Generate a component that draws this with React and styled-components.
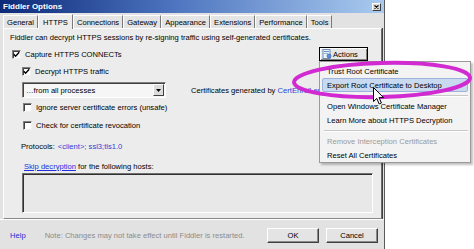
import styled, { createGlobalStyle } from "styled-components";

const GlobalStyle = createGlobalStyle`
  html, body {
    margin: 0;
    background: #ffffff;
  }
  body {
    font-family: "Liberation Sans", Arial, sans-serif;
    font-size: 7.6px;
    color: #000000;
  }
`;

const Page = styled.div`
  position: relative;
  width: 474px;
  height: 249px;
  overflow: hidden;
  display: flex;
`;

const Dialog = styled.div`
  width: 385px;
  height: 249px;
  box-sizing: border-box;
  background: #e2e2e2;
  border-right: 1px solid #5a5a5a;
  display: flex;
  flex-direction: column;
`;

const TitleBar = styled.div`
  height: 13px;
  flex: none;
  display: flex;
  align-items: center;
  justify-content: space-between;
  padding: 0 3px 0 3px;
  background: linear-gradient(to right, #0c2a78, #4d74bf 45%, #a9cbef);
  color: #ffffff;
  font-weight: bold;
  font-size: 8px;
`;

const CloseButton = styled.div`
  width: 9px;
  height: 8px;
  box-sizing: border-box;
  background: #d8d8d8;
  border: 1px solid;
  border-color: #ffffff #404040 #404040 #ffffff;
  display: flex;
  align-items: center;
  justify-content: center;
`;

const Body = styled.div`
  padding: 0 2px 0 3px;
  display: flex;
  flex-direction: column;
`;

const TabRow = styled.div`
  height: 15px;
  display: flex;
  align-items: flex-end;
`;

const Tab = styled.div`
  height: ${(p) => (p.$active ? 15 : 13)}px;
  box-sizing: border-box;
  padding: 0 ${(p) => (p.$active ? 4 : 3)}px;
  display: flex;
  align-items: center;
  background: ${(p) => (p.$active ? "#ececec" : "#e4e4e4")};
  border-left: 1px solid #ffffff;
  border-top: 1px solid #ffffff;
  border-right: 1px solid #7a7a7a;
  margin-bottom: ${(p) => (p.$active ? -1 : 0)}px;
  position: relative;
  z-index: ${(p) => (p.$active ? 1 : 0)};
`;

const Panel = styled.div`
  height: 191px;
  box-sizing: border-box;
  background: #ececec;
  border: 1px solid;
  border-color: #ffffff #6e6e6e #8a8a8a #ffffff;
  box-shadow: 1px 0 0 #404040;
  display: flex;
  flex-direction: column;
`;

const Row = styled.div`
  display: flex;
  align-items: center;
  height: ${(p) => p.$h || 12}px;
  margin-top: ${(p) => p.$mt || 0}px;
  padding-left: ${(p) => p.$indent || 0}px;
  white-space: nowrap;
`;

const Box = styled.span`
  width: 9px;
  height: 9px;
  box-sizing: border-box;
  flex: none;
  background: #ffffff;
  border: 1px solid;
  border-color: #808080 #f0f0f0 #f0f0f0 #808080;
  box-shadow: inset 1px 1px 0 #404040;
  margin-right: 4px;
  display: flex;
  align-items: center;
  justify-content: center;
`;

const ActionsButton = styled.div`
  margin-left: auto;
  margin-right: 13px;
  width: 49px;
  height: 14px;
  box-sizing: border-box;
  border: 1px solid #000000;
  background: #e6e6e6;
  box-shadow: inset 1px 1px 0 #ffffff, inset -1px -1px 0 #808080;
  display: flex;
  align-items: center;
  padding-left: 2px;
  gap: 1px;
`;

const Select = styled.div`
  width: 144px;
  height: 16px;
  box-sizing: border-box;
  background: #f6f6f6;
  border: 1px solid;
  border-color: #808080 #ffffff #ffffff #808080;
  box-shadow: inset 1px 1px 0 #404040;
  display: flex;
  align-items: center;
  padding-left: 3px;
`;

const SelectArrow = styled.div`
  margin-left: auto;
  width: 11px;
  height: 12px;
  box-sizing: border-box;
  margin-right: 1px;
  background: #dcdcdc;
  border: 1px solid;
  border-color: #ffffff #404040 #404040 #ffffff;
  display: flex;
  align-items: center;
  justify-content: center;
`;

const Muted = styled.span`
  margin-left: 25px;
`;

const Link = styled.span`
  color: ${(p) => p.$color || "#2a3fd6"};
  text-decoration: ${(p) => (p.$underline ? "underline" : "none")};
  margin-left: ${(p) => p.$ml || 0}px;
`;

const HostList = styled.div`
  margin-top: 1px;
  margin-left: 18px;
  width: 351px;
  height: 40px;
  box-sizing: border-box;
  background: #e8e8e8;
  border: 1px solid;
  border-color: #707070 #ffffff #ffffff #707070;
  box-shadow: inset 1px 1px 0 #303030;
`;

const Footer = styled.div`
  flex: 1;
  display: flex;
  align-items: flex-start;
  padding: 8px 6px 0 10px;
  border-top: 1px solid #ffffff;
`;

const FooterRow = styled.div`
  height: 15px;
  width: 100%;
  display: flex;
  align-items: center;
`;

const Help = styled.span`
  color: #1a2fd0;
`;

const Note = styled.span`
  color: #8c8c8c;
  margin-left: 19px;
`;

const Button = styled.div`
  width: 52px;
  height: 15px;
  box-sizing: border-box;
  margin-left: ${(p) => (p.$first ? "auto" : "7px")};
  background: #e4e4e4;
  border: 1px solid;
  border-color: #ffffff #404040 #404040 #ffffff;
  box-shadow: inset -1px -1px 0 #8a8a8a;
  display: flex;
  align-items: center;
  justify-content: center;
`;

const Menu = styled.div`
  position: absolute;
  left: 319px;
  top: 61px;
  width: 152px;
  height: 102px;
  box-sizing: border-box;
  padding: 2px 2px 0 2px;
  background: #f3f3f3;
  border: 1px solid #9a9a9a;
  box-shadow: 2px 2px 2px rgba(0, 0, 0, 0.25);
  display: flex;
  flex-direction: column;
`;

const MenuItem = styled.div`
  height: 14px;
  flex: none;
  box-sizing: border-box;
  display: flex;
  align-items: center;
  padding-left: 4px;
  color: ${(p) => (p.$disabled ? "#9a9a9a" : "#000000")};
  background: ${(p) => (p.$hover ? "#c9daf0" : "transparent")};
  border: 1px solid ${(p) => (p.$hover ? "#9ab4dc" : "transparent")};
  border-radius: 2px;
`;

const Separator = styled.div`
  height: 7px;
  flex: none;
  display: flex;
  align-items: center;
  &::after {
    content: "";
    flex: 1;
    margin-left: 2px;
    border-top: 1px solid #c8c8c8;
    border-bottom: 1px solid #ffffff;
  }
`;

const Overlay = styled.svg`
  position: absolute;
  left: ${(p) => p.$x}px;
  top: ${(p) => p.$y}px;
  pointer-events: none;
`;

function Check({ checked }) {
  return (
    <Box>
      {checked && (
        <svg width="7" height="7" viewBox="0 0 7 7">
          <polyline points="0.8,3.2 2.6,5.2 6.2,1.2" fill="none" stroke="#000" strokeWidth="1.4" />
        </svg>
      )}
    </Box>
  );
}

const tabs = ["General", "HTTPS", "Connections", "Gateway", "Appearance", "Extensions", "Performance", "Tools"];

export default function App() {
  return (
    <>
      <GlobalStyle />
      <Page>
        <Dialog>
          <TitleBar>
            <span>Fiddler Options</span>
            <CloseButton>
              <svg width="5" height="4" viewBox="0 0 5 4">
                <path d="M0.5 0.5 L4.5 3.5 M4.5 0.5 L0.5 3.5" stroke="#000" strokeWidth="1.1" />
              </svg>
            </CloseButton>
          </TitleBar>
          <Body>
            <TabRow>
              {tabs.map((t) => (
                <Tab key={t} $active={t === "HTTPS"}>
                  {t}
                </Tab>
              ))}
            </TabRow>
            <Panel>
              <Row $mt={2} $indent={6}>
                Fiddler can decrypt HTTPS sessions by re-signing traffic using self-generated certificates.
              </Row>
              <Row $mt={4} $h={14} $indent={8}>
                <Check checked />
                Capture HTTPS CONNECTs
                <ActionsButton>
                  <svg width="10" height="10" viewBox="0 0 10 10">
                    <rect x="1" y="0.5" width="7" height="9" fill="#eaf2fb" stroke="#6d8fb8" />
                    <rect x="2" y="2" width="5" height="1" fill="#6d8fb8" />
                    <rect x="2" y="4" width="4" height="1" fill="#9bb4d4" />
                    <circle cx="7" cy="7" r="2" fill="#5b8fd6" stroke="#2d5aa0" strokeWidth="0.6" />
                  </svg>
                  Actions
                </ActionsButton>
              </Row>
              <Row $mt={4} $indent={18}>
                <Check checked />
                Decrypt HTTPS traffic
              </Row>
              <Row $mt={5} $h={16} $indent={18}>
                <Select>
                  …from all processes
                  <SelectArrow>
                    <svg width="5" height="3" viewBox="0 0 5 3">
                      <polygon points="0,0 5,0 2.5,3" fill="#000" />
                    </svg>
                  </SelectArrow>
                </Select>
                <Muted>
                  Certificates generated by <Link>CertEnroll engine</Link>
                </Muted>
              </Row>
              <Row $mt={3} $indent={19}>
                <Check />
                Ignore server certificate errors (unsafe)
              </Row>
              <Row $mt={6} $indent={19}>
                <Check />
                Check for certificate revocation
              </Row>
              <Row $mt={9} $indent={17}>
                Protocols:
                <Link $ml={3}>&lt;client&gt;; ssl3;tls1.0</Link>
              </Row>
              <Row $mt={8} $indent={20}>
                <Link $underline $color="#1f2fe0">
                  Skip decryption
                </Link>
                &nbsp;for the following hosts:
              </Row>
              <HostList />
            </Panel>
          </Body>
          <Footer>
            <FooterRow>
              <Help>Help</Help>
              <Note>Note: Changes may not take effect until Fiddler is restarted.</Note>
              <Button $first>OK</Button>
              <Button>Cancel</Button>
            </FooterRow>
          </Footer>
        </Dialog>

        <Menu>
          <MenuItem>Trust Root Certificate</MenuItem>
          <MenuItem $hover>Export Root Certificate to Desktop</MenuItem>
          <Separator />
          <MenuItem>Open Windows Certificate Manager</MenuItem>
          <MenuItem>Learn More about HTTPS Decryption</MenuItem>
          <Separator />
          <MenuItem $disabled>Remove Interception Certificates</MenuItem>
          <MenuItem>Reset All Certificates</MenuItem>
        </Menu>

        <Overlay $x={290} $y={57} width="184" height="46" viewBox="0 0 184 46">
          <ellipse
            cx="92"
            cy="23"
            rx="88"
            ry="17"
            fill="none"
            stroke="#d02ad0"
            strokeWidth="4"
            transform="rotate(-1.5 92 23)"
          />
        </Overlay>

        <Overlay $x={373} $y={87} width="12" height="19" viewBox="0 0 12 19">
          <path
            d="M0.5 0.5 L0.5 14.5 L3.8 11.4 L6.2 17 L8.4 16 L6 10.6 L10.5 10.6 Z"
            fill="#ffffff"
            stroke="#000000"
            strokeWidth="1"
          />
        </Overlay>
      </Page>
    </>
  );
}
